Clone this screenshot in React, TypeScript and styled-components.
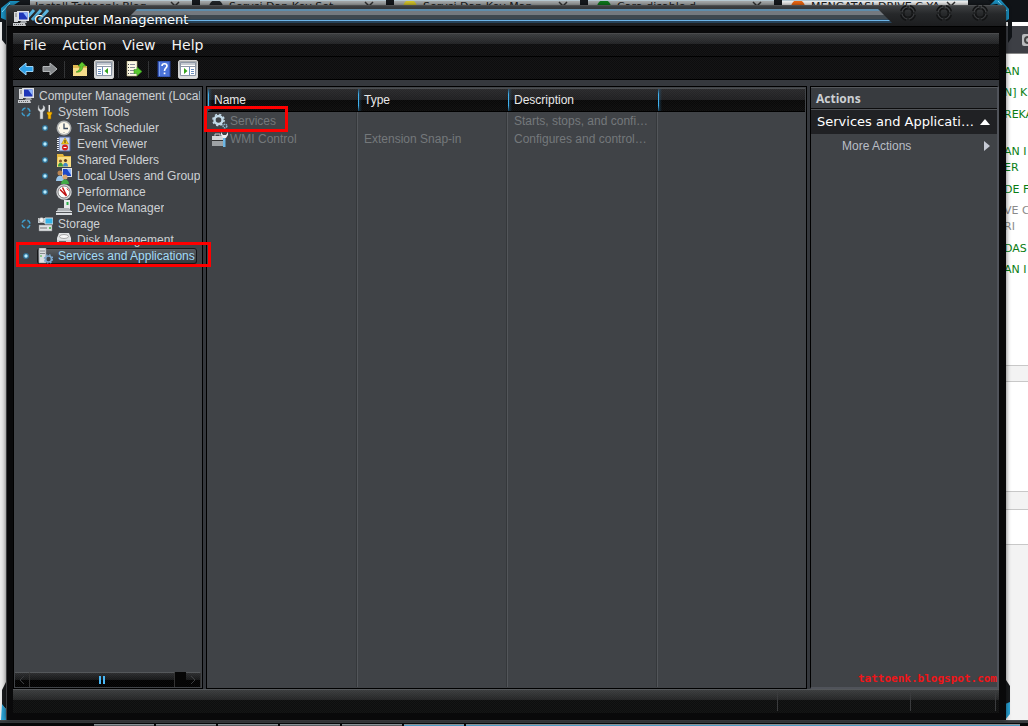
import React from "react";
import styled, { createGlobalStyle, css } from "styled-components";

const WIDE = '"DejaVu Sans", Verdana, sans-serif';
const NARROW = '"Liberation Sans", Arial, sans-serif';
const carbon = "conic-gradient(rgba(255,255,255,0.03) 25%, transparent 0 50%, rgba(255,255,255,0.03) 0 75%, transparent 0) 0 0 / 2px 2px";

const Global = createGlobalStyle`
  html, body, #root { height: 100%; }
  body { margin: 0; overflow: hidden; background: #fff; }
  *, *::before, *::after { box-sizing: border-box; }
  button { font: inherit; color: inherit; border: 0; background: none; padding: 0; margin: 0; text-align: left; }
  ul { list-style: none; margin: 0; padding: 0; }
  h2, h3, p { margin: 0; font: inherit; }
`;

/* ---------- desktop and browser behind the window ---------- */

const Desktop = styled.div`
  position: relative;
  height: 100vh;
  display: flex;
  flex-direction: column;
  overflow: hidden;
  background: #ebebeb;
`;

const TabStrip = styled.div`
  display: flex;
  height: 22px;
  flex: none;
  padding-left: 6px;
  background: #15191d;
  font: 11px/12px ${WIDE};
  color: #202020;
  overflow: hidden;
`;

const BrowserTab = styled.div<{ $active?: boolean }>`
  display: flex;
  flex: none;
  align-items: flex-start;
  gap: 6px;
  width: 186px;
  height: 12px;
  padding: 0 12px 0 8px;
  margin-right: 8px;
  white-space: nowrap;
  border-top: 1px solid #b9cdd6;
  background: ${(p) => (p.$active ? "#f4f5f5" : "#a9adae")};
  svg { flex: none; }
  span { flex: 1; overflow: hidden; height: 10px; }
`;

const Backdrop = styled.div`
  flex: 1;
  display: flex;
  justify-content: flex-end;
`;

const WebPage = styled.div`
  width: 28px;
  display: flex;
  flex-direction: column;
  background: #fff;
  font: 11px/16px ${WIDE};
  white-space: nowrap;
  overflow: hidden;
`;

const PageBar = styled.div`
  height: 28px;
  margin-top: 4px;
  padding: 8px 0 0 22px;
  background: #3d3f45;
  border-bottom: 1px solid #888;
  svg { display: block; }
`;

const PageLine = styled.p<{ $gap: number; $muted?: boolean }>`
  height: 16px;
  padding-left: 4px;
  margin-top: ${(p) => p.$gap}px;
  color: ${(p) => (p.$muted ? "#8a8a8a" : "#0a7d14")};
`;

const PageBand = styled.div<{ $h: number; $shade?: boolean }>`
  height: ${(p) => p.$h}px;
  background: ${(p) => (p.$shade ? "#f3f3f3" : "#fff")};
  border-top: ${(p) => (p.$shade ? "1px solid #c8c8c8" : "0")};
  border-bottom: ${(p) => (p.$shade ? "1px solid #c8c8c8" : "0")};
`;

const PageFooter = styled.div`
  flex: 1;
  border-top: 1px solid #c8c8c8;
  background: #f3f3f3;
`;

const Taskbar = styled.div`
  height: 6px;
  flex: none;
  display: flex;
  gap: 2px;
  padding: 3px 8px 0 94px;
  border-top: 1px solid #4a4c4f;
  background: linear-gradient(#3a3c3f 0 2px, #08090a 2px);
`;

const Task = styled.div<{ $tone?: "on" | "strip" }>`
  width: 60px;
  height: 4px;
  background: ${(p) => (p.$tone ? "#4f9cc4" : "#5b6064")};
  border-top: 1px solid #8d9498;
  ${(p) => p.$tone === "strip" && css`flex: 1;`}
`;

/* ---------- window chrome ---------- */

const Window = styled.section`
  position: absolute;
  inset: 5px 22px 6px 6px;
  display: flex;
  flex-direction: column;
  background: #09090a;
  border-left: 1px solid #3c3d3f;
  border-radius: 5px 5px 0 0;
  box-shadow: 0 0 5px rgba(0, 0, 0, 0.6);
`;

const Corner = styled.svg<{ $v: "top" | "bottom"; $h: "left" | "right" }>`
  position: absolute;
  ${(p) => p.$v}: 0;
  ${(p) => p.$h}: 0;
  width: 40px;
  height: 46px;
`;

const TitleBar = styled.header`
  position: relative;
  flex: none;
  display: flex;
  align-items: center;
  height: 22px;
  padding: 0 16px 0 6px;
  border-radius: 5px 5px 0 0;
  border-top: 1px solid #4c4e50;
  border-bottom: 1px solid #000;
  background: linear-gradient(#3e4042, #26282a 40%, #1c1d1f);
`;

const TitleBand = styled.div`
  position: absolute;
  left: 116px;
  right: 114px;
  top: 3px;
  height: 14px;
  clip-path: polygon(14px 0, calc(100% - 14px) 0, 100% 100%, 0 100%);
  background: linear-gradient(#5e8cab 0 2px, #74797f 2px 6px, #3f484f 6px 10px, #2e4558 10px 11px, #6db4e6 11px 12px, #27435a 12px);
`;

const TitleStripes = styled.svg`
  position: absolute;
  left: 16px;
  top: 3px;
`;

const Title = styled.h1`
  position: relative;
  flex: 1;
  margin: 0;
  padding: 8px 0 0 5px;
  font: 13px/16px ${WIDE};
  color: #fff;
  text-shadow: 0 0 3px #000;
`;

const TitleIcon = styled.span`
  position: relative;
  display: flex;
  padding-top: 5px;
`;

const WindowButtons = styled.div`
  display: flex;
  gap: 16px;
  align-items: center;
  padding-bottom: 6px;
  button { display: flex; width: 20px; height: 20px; align-items: center; justify-content: center; }
`;

const Client = styled.div`
  flex: 1;
  min-height: 0;
  display: flex;
  flex-direction: column;
  margin: 6px 7px 7px 6px;
`;

const MenuBar = styled.nav`
  flex: none;
  display: flex;
  height: 24px;
  padding: 0 2px;
  border-top: 1px solid #4a4b4d;
  border-bottom: 1px solid #000;
  background: ${carbon}, linear-gradient(#3a3c3e, #202123 10px, #0d0d0e 10px);
  font: 14px/20px ${WIDE};
  color: #f2f2f2;
  button { padding: 0 8px; }
`;

const ToolBar = styled.div`
  flex: none;
  display: flex;
  align-items: center;
  height: 23px;
  padding: 2px 0 0 3px;
  border-bottom: 1px solid #000;
  background: ${carbon}, #0d0d0e;
`;

const Tool = styled.button<{ $framed?: boolean }>`
  display: flex;
  align-items: center;
  justify-content: center;
  width: 20px;
  height: 19px;
  margin-right: 4px;
  ${(p) =>
    p.$framed &&
    css`
      border: 1px solid #d4d4d4;
      border-radius: 2px;
      background: linear-gradient(#a8abad, #dcdedf);
    `}
`;

const Divider = styled.span`
  width: 1px;
  height: 17px;
  margin-right: 5px;
  background: #333436;
`;

const Workspace = styled.main`
  flex: 1;
  min-height: 0;
  display: grid;
  grid-template-columns: 190px minmax(0, 1fr) 189px;
  gap: 3px;
  padding-top: 6px;
  background: #35383d;
`;

const pane = css`
  min-width: 0;
  min-height: 0;
  display: flex;
  flex-direction: column;
  border: 1px solid #000;
  background: #404347;
  color: #cdd0d3;
  font: 12px/16px ${NARROW};
`;

/* ---------- tree ---------- */

const TreePane = styled.aside`
  ${pane}
`;

const Tree = styled.ul`
  flex: 1;
  padding-top: 1px;
`;

const TreeItem = styled.li<{ $level: number }>`
  position: relative;
  display: flex;
  align-items: center;
  height: 16px;
  padding-left: ${(p) => (p.$level === 0 ? 4 : 4 + (p.$level - 1) * 19)}px;
`;

const Marker = styled.span`
  flex: none;
  display: flex;
  width: 19px;
  padding-left: 2px;
`;

const Node = styled.button<{ $selected?: boolean }>`
  display: flex;
  align-items: center;
  min-width: 0;
  height: 16px;
  padding-right: 2px;
  svg { flex: none; }
  span { overflow: hidden; white-space: nowrap; padding-left: 5px; }
  ${(p) =>
    p.$selected &&
    css`
      color: #a4dcf8;
      border-radius: 3px;
      box-shadow: inset 0 0 0 1px #17181a;
      background: linear-gradient(#5c6064, #45494d 50%, #36393d);
    `}
`;

const Highlight = styled.span<{ $for: "tree" | "row" }>`
  position: absolute;
  z-index: 2;
  border: 3px solid #f00;
  pointer-events: none;
  ${(p) => (p.$for === "tree" ? "inset: -6px -9px -3px 2px;" : "inset: -6px auto -2px -4px; width: 84px;")}
`;

const ScrollBar = styled.div`
  flex: none;
  display: grid;
  grid-template-columns: 15px 1fr 11px 15px;
  height: 15px;
  margin: 0 1px 1px;
  background: #060606;
`;

const ScrollPart = styled.button`
  display: flex;
  align-items: center;
  justify-content: center;
  border-top: 1px solid #55585b;
  border-right: 1px solid #333;
  background: ${carbon}, linear-gradient(#2b2c2e, #161718 50%, #020202 50%);
`;

const Grip = styled.span`
  width: 6px;
  height: 8px;
  border: solid #48b7f5;
  border-width: 0 2px;
`;

/* ---------- list ---------- */

const ListPane = styled.div`
  ${pane}
  padding: 1px;
`;

const List = styled.table`
  width: 100%;
  height: 100%;
  table-layout: fixed;
  border-collapse: separate;
  border-spacing: 0;
  th, td { padding: 0; text-align: left; font-weight: normal; white-space: nowrap; overflow: hidden; text-overflow: ellipsis; }
`;

const HeadCell = styled.th`
  height: 24px;
  color: #e8e8e8;
  border-top: 1px solid #4c4f52;
  border-bottom: 1px solid #000;
  background: ${carbon}, linear-gradient(#29292b, #1f1f21 50%, #080808 50%, #0c0c0c);
  div {
    height: 22px;
    padding-left: 6px;
    line-height: 22px;
    background: linear-gradient(transparent, #3fb1ee 25%, #3fb1ee 75%, transparent) left / 1px 100% no-repeat,
      linear-gradient(90deg, rgba(40, 130, 190, 0.4), transparent 4px);
  }
`;

const Cell = styled.td`
  height: 18px;
  color: #74787b;
  border-right: 1px solid #53565a;
  box-shadow: inset -1px 0 0 #35383b;
  &:last-child { border-right: 0; box-shadow: none; }
`;

const CellText = styled.div`
  position: relative;
  display: flex;
  align-items: center;
  height: 18px;
  padding-left: 4px;
  span { overflow: hidden; text-overflow: ellipsis; padding: 0 8px 0 2px; }
`;

const TextOnly = styled.div`
  padding: 0 8px 0 6px;
  overflow: hidden;
  text-overflow: ellipsis;
`;

const LeadCell = styled(Cell)`
  && { overflow: visible; }
`;

/* ---------- actions ---------- */

const ActionsPane = styled.aside`
  ${pane}
  border-width: 1px 2px 2px 1px;
  border-color: #000 #50535a #50535a #000;
`;

const PaneHeading = styled.h2`
  height: 22px;
  padding-left: 5px;
  border-top: 1px solid #55585c;
  border-bottom: 1px solid #0c0c0d;
  background: #383b3f;
  font: bold 12px/21px "Open Sans", "Noto Sans", sans-serif;
`;

const GroupHeading = styled.button`
  display: flex;
  align-items: center;
  height: 25px;
  padding: 0 7px 0 6px;
  border-top: 1px solid #505357;
  background: #202124;
  color: #fff;
  font: 13px/16px ${WIDE};
  svg { flex: none; }
  span { flex: 1; min-width: 0; overflow: hidden; white-space: nowrap; text-overflow: ellipsis; margin-right: 4px; }
`;

const ActionItem = styled.button`
  display: flex;
  align-items: center;
  justify-content: space-between;
  height: 24px;
  padding: 0 7px 0 31px;
  color: #b9bec6;
`;

const Watermark = styled.a`
  margin-top: auto;
  align-self: flex-end;
  color: #f01418;
  font: bold 11px/16px "DejaVu Sans Mono", monospace;
  text-decoration: none;
`;

const StatusBar = styled.footer`
  flex: none;
  display: grid;
  grid-template-columns: 1fr 133px 85px 3px;
  height: 24px;
  padding: 2px 0;
  border-top: 1px solid #55585b;
  background: ${carbon}, linear-gradient(#3a3c3d, #232425 10px, #0d0e0e 10px);
  span { border-right: 1px solid #3a3b3d; }
  span:last-child { border: 0; }
`;

/* ---------- icons ---------- */

type IconName =
  | "computer" | "tools" | "clock" | "event" | "folder" | "users" | "gauge"
  | "device" | "storage" | "disk" | "server" | "gears" | "toolbox"
  | "back" | "forward" | "up" | "export" | "help" | "paneLeft" | "paneRight";

const art: Record<IconName, React.ReactNode> = {
  computer: (
    <>
      <path d="M1 1h4v10H1z" fill="#d6d8da" /><path d="M2 3h2M2 5h2" stroke="#777" />
      <path d="M4 0h12v10H5z" fill="#dfe2e5" /><path d="M6 1.500h8.500v7H6z" fill="#1d36b8" />
      <path d="M10 1.500h4.500v6z" fill="#8fb6ff" />
      <path d="M8 10h5l1 2H7z" fill="#9da1a5" /><path d="M0 12h12l1 3H0z" fill="#c9cccf" /><path d="M1 13.500h10" stroke="#666" strokeDasharray="1 1" />
    </>
  ),
  tools: (
    <>
      <path d="M2 1v3l2 2 2-2V1l2 2v3L6 8v7H3V8L1 6V3z" fill="#d9dcde" stroke="#76797c" strokeWidth=".5" />
      <path d="M11.500 1h1.500v7h-1.500z" fill="#e8e8e8" /><path d="M10 8h5v2l-1 1v4h-3v-4l-1-1z" fill="#f5b400" stroke="#8a5c00" strokeWidth=".6" />
    </>
  ),
  clock: (
    <>
      <circle cx="8" cy="8" r="7.500" fill="#a8abad" /><circle cx="8" cy="8" r="6" fill="#fdf8ea" />
      <path d="M8 3.500V8.500h4" fill="none" stroke="#3d4c60" strokeWidth="1.300" /><path d="M3 8h1M8 13v-1" stroke="#999" />
    </>
  ),
  event: (
    <>
      <path d="M3 1h11v14H3z" fill="#c9d5ee" stroke="#5068a0" /><path d="M2 2v13" stroke="#e9edf5" strokeWidth="2" strokeDasharray="1 1" />
      <path d="M9 2l3.500 6h-7z" fill="#ffd21c" stroke="#9a7000" strokeWidth=".5" /><path d="M9 4v3" stroke="#222" />
      <circle cx="9" cy="11.500" r="3" fill="#d32020" /><path d="M7.500 11.500h3" stroke="#fff" />
    </>
  ),
  folder: (
    <>
      <path d="M1 2h6l1 2h7v11H1z" fill="#e4b63e" /><path d="M2 5h13v10H1z" fill="#f8dd84" />
      <circle cx="4.500" cy="9" r="1.600" fill="#8a5a2c" /><path d="M2 14.500c0-5 5-5 5 0z" fill="#3a9a3c" />
      <circle cx="9.500" cy="8.500" r="1.600" fill="#5d3a18" /><path d="M7 14.500c0-5 5-5 5 0z" fill="#3f86c8" />
    </>
  ),
  users: (
    <>
      <path d="M6 0h10v9H6z" fill="#dfe2e5" /><path d="M7 1h8v7H7z" fill="#1d48c8" /><path d="M11 1h4v6z" fill="#8fb6ff" />
      <circle cx="4" cy="5" r="2.500" fill="#b98451" /><path d="M0 13c0-7 8-7 8 0z" fill="#9cc9ee" />
      <circle cx="9" cy="9" r="2.500" fill="#d8a571" /><path d="M5 16c0-6 8-6 8 0z" fill="#3faa45" />
    </>
  ),
  gauge: (
    <>
      <circle cx="8" cy="8" r="7.700" fill="#d4d6d8" /><circle cx="8" cy="8" r="6" fill="#fff" stroke="#555" strokeWidth=".7" />
      <path d="M4 5.500L10.500 12M6.500 3.500l4 8" stroke="#c01414" strokeWidth="1.500" /><path d="M11 4.500l1.500 2" stroke="#c01414" />
    </>
  ),
  device: (
    <>
      <path d="M8 0h6v9H8z" fill="#e6e8ea" /><path d="M10.500 2h2v3h-2z" fill="#2ab04a" />
      <path d="M2 8h11l2 3H1z" fill="#aeb2b5" /><path d="M0 11h16v4H0z" fill="#dadde0" /><path d="M0 12.500h16" stroke="#55585b" />
    </>
  ),
  storage: (
    <>
      <path d="M1 2h7v5H1z" fill="#c5c9cc" /><circle cx="4.500" cy="4" r="2.500" fill="#f2f2f2" stroke="#777" strokeWidth=".5" />
      <path d="M8 2h8v6H8z" fill="#35b4e8" stroke="#d8dbde" /><path d="M2 9h13v6H2z" fill="#dfe2e4" stroke="#85898c" strokeWidth=".5" />
      <path d="M3 12h7" stroke="#777" /><path d="M12 12h2" stroke="#36b33e" strokeWidth="1.500" />
    </>
  ),
  disk: (
    <>
      <path d="M3 1h10l2 5v3H1V6z" fill="#e0e2e4" /><ellipse cx="8" cy="4.500" rx="4.500" ry="2" fill="#f8f8f8" stroke="#888" strokeWidth=".7" /><path d="M1 8h14v5H1z" fill="#c8cbce" /><path d="M3 9.500h7" stroke="#666" />
    </>
  ),
  server: (
    <>
      <path d="M2 0h7v15H2z" fill="#dcdfe1" stroke="#8d9194" strokeWidth=".6" /><path d="M3 3h5M3 5.500h5" stroke="#868a8d" /><path d="M3 8h2" stroke="#36b33e" />
      <circle cx="11.500" cy="11" r="3" fill="none" stroke="#7da8cf" strokeWidth="1.600" /><circle cx="11.500" cy="11" r="4.200" fill="none" stroke="#7da8cf" strokeWidth="1.200" strokeDasharray="1.700 1.600" />
    </>
  ),
  gears: (
    <>
      <circle cx="6.500" cy="7" r="4" fill="none" stroke="#c3dae8" strokeWidth="2.400" /><circle cx="6.500" cy="7" r="5.600" fill="none" stroke="#c3dae8" strokeWidth="1.500" strokeDasharray="2.200 2.200" />
      <circle cx="13" cy="13" r="1.800" fill="none" stroke="#8fb4cc" strokeWidth="1.600" strokeDasharray="1.500 .6" />
    </>
  ),
  toolbox: (
    <>
      <path d="M3 5V3h5v2" fill="none" stroke="#c8cbcd" /><path d="M0 5h11v4H0z" fill="#d4d6d8" /><path d="M0 10h11v5H0z" fill="#9ea2a5" /><path d="M0 9.500h11" stroke="#333" />
      <path d="M11 7h2.500v9H11z" fill="#6cb6e4" /><path d="M9 1v3l2 3h3l2-3V1l-2 3h-3z" fill="#eceeef" />
    </>
  ),
  back: <path d="M1 8l7-6v3.500h7v5H8V14z" fill="#2e9fe6" stroke="#9cd6fa" />,
  forward: <path d="M15 8L8 2v3.500H1v5h7V14z" fill="#85888b" stroke="#b5b8ba" />,
  up: (
    <>
      <path d="M1 4h5l1 1h8v10H1z" fill="#e0b850" /><path d="M1 7h14v8H1z" fill="#f6dc8a" />
      <path d="M4 11c3-1 4-3 4-6H6l4-4 4 4h-3c0 4-3 7-7 6z" fill="#5fc62e" stroke="#2d7c10" strokeWidth=".5" />
    </>
  ),
  export: (
    <>
      <path d="M1 0h10v15H1z" fill="#fbf8e4" stroke="#b3a87a" strokeWidth=".6" /><path d="M4 3.500h5M4 6.500h5M4 9.500h4M4 12.500h5" stroke="#8a8c98" /><path d="M2 3.500h1M2 6.500h1M2 9.500h1M2 12.500h1" stroke="#444" />
      <path d="M8 8.500h3V6l5 4.500-5 4.500v-2.500H8z" fill="#58c832" stroke="#2d8a12" strokeWidth=".5" />
    </>
  ),
  help: (
    <>
      <path d="M2 0h12v16H2z" fill="#4a72d8" stroke="#24409a" /><path d="M3.500 1v14" stroke="#7da0f0" />
      <path d="M6 5c0-3 5-3 5 0 0 2-2.500 2-2.500 5" fill="none" stroke="#fff" strokeWidth="1.600" /><path d="M7.700 11.500h1.700v1.700H7.700z" fill="#fff" />
    </>
  ),
  paneLeft: (
    <>
      <path d="M.5 1.500h15v13H.5z" fill="#fff" stroke="#8d97a6" /><path d="M1 3h14M1 5.500h14" stroke="#8d97a6" />
      <path d="M6.500 6v8M2 8.500h3M2 10.500h3M2 12.500h3" stroke="#6b90c0" /><path d="M12 7v6L8.500 10z" fill="#35a51e" />
    </>
  ),
  paneRight: (
    <>
      <path d="M.5 1.500h15v13H.5z" fill="#fff" stroke="#8d97a6" /><path d="M1 3h14M1 5.500h14" stroke="#8d97a6" />
      <path d="M9.500 6v8M11 8.500h3M11 10.500h3M11 12.500h3" stroke="#6b90c0" /><path d="M4 7v6l3.500-3z" fill="#35a51e" />
    </>
  ),
};

const Icon = ({ name }: { name: IconName }) => (
  <svg width="16" height="16" viewBox="0 0 16 16" aria-hidden="true">{art[name]}</svg>
);

const Ring = () => (
  <svg width="12" height="12" viewBox="0 0 12 12" aria-hidden="true">
    <circle cx="6" cy="6" r="4" fill="none" stroke="#3f9ccb" strokeWidth="1.600" strokeDasharray="4.280 2" strokeDashoffset="-1" />
  </svg>
);

const Dot = () => (
  <svg width="12" height="12" viewBox="0 0 12 12" aria-hidden="true">
    <circle cx="6" cy="6" r="3" fill="#2a86b8" opacity=".7" /><circle cx="6" cy="6" r="1.700" fill="#b8ecff" />
  </svg>
);

const Crosshair = () => (
  <svg width="20" height="20" viewBox="0 0 20 20" aria-hidden="true">
    <circle cx="10" cy="10" r="7.500" fill="none" stroke="#131415" strokeWidth="1.500" strokeDasharray="8 3.780" strokeDashoffset="-1.900" />
    <circle cx="10" cy="10" r="4.500" fill="none" stroke="#131415" strokeWidth="1.500" strokeDasharray="5 2.070" strokeDashoffset="-1" />
    <circle cx="10" cy="10" r="6" fill="none" stroke="#46484a" strokeWidth=".7" />
    <path d="M10 3v4M10 13v4M3 10h4M13 10h4" stroke="#131415" />
  </svg>
);

/* ---------- data ---------- */

type TreeRow = { level: number; icon: IconName; label: string; mark?: "ring" | "dot"; selected?: boolean };

const tree: TreeRow[] = [
  { level: 0, icon: "computer", label: "Computer Management (Local)" },
  { level: 1, icon: "tools", label: "System Tools", mark: "ring" },
  { level: 2, icon: "clock", label: "Task Scheduler", mark: "dot" },
  { level: 2, icon: "event", label: "Event Viewer", mark: "dot" },
  { level: 2, icon: "folder", label: "Shared Folders", mark: "dot" },
  { level: 2, icon: "users", label: "Local Users and Groups", mark: "dot" },
  { level: 2, icon: "gauge", label: "Performance", mark: "dot" },
  { level: 2, icon: "device", label: "Device Manager" },
  { level: 1, icon: "storage", label: "Storage", mark: "ring" },
  { level: 2, icon: "disk", label: "Disk Management" },
  { level: 1, icon: "server", label: "Services and Applications", mark: "dot", selected: true },
];

const tabs = [
  { title: "Install Tattoenk Blog", color: "#e8641b" },
  { title: "Servsi Dan Key Set", color: "#22262a" },
  { title: "Servsi Dan Key Man", color: "#d9c92e" },
  { title: "Cara disable d", color: "#0d7a1c" },
  { title: "MENGATASI DRIVE C YA", color: "#f26a13", active: true },
];

const pageLines = [
  { text: "AN", gap: 10 },
  { text: "N] K", gap: 5 },
  { text: "REKA", gap: 6 },
  { text: "AN I", gap: 21 },
  { text: "ER", gap: 0 },
  { text: "DE F", gap: 6 },
  { text: "VE C", gap: 5, muted: true },
  { text: "RI", gap: 0, muted: true },
  { text: "DAS", gap: 6 },
  { text: "AN I", gap: 5 },
];

export default function App() {
  return (
    <>
      <Global />
      <Desktop>
        <TabStrip>
          {tabs.map((t) => (
            <BrowserTab key={t.title} $active={t.active}>
              <svg width="15" height="12" aria-hidden="true"><circle cx="8" cy="6" r="7" fill={t.color} /></svg>
              <span>{t.title}</span>
              <svg width="10" height="10" aria-hidden="true"><path d="M1 1l8 8M9 1l-8 8" stroke="#333" strokeWidth="1.500" /></svg>
            </BrowserTab>
          ))}
        </TabStrip>
        <Backdrop>
          <WebPage>
            <PageBar>
              <svg width="12" height="12" aria-hidden="true"><rect width="12" height="12" rx="2" fill="#b9bbbd" /><circle cx="6" cy="6" r="3" fill="none" stroke="#444" strokeWidth="2" /></svg>
            </PageBar>
            {pageLines.map((l, i) => (
              <PageLine key={i} $gap={l.gap} $muted={l.muted}>{l.text}</PageLine>
            ))}
            <PageBand $h={87} />
            <PageBand $h={17} $shade />
            <PageBand $h={109} />
            <PageBand $h={19} $shade />
            <PageBand $h={34} />
            <PageFooter />
          </WebPage>
        </Backdrop>
        <Taskbar>
          <Task /><Task /><Task /><Task /><Task /><Task $tone="on" /><Task $tone="strip" />
        </Taskbar>

        <Corner $v="top" $h="left" viewBox="0 0 40 46">
          <path d="M0 0h30v8H14L7 22v24L2 40V22H0z" fill="#15191d" />
          <path d="M1 18V8l9-7h10l-6 4-6 8v8z" fill="#1c93c4" /><path d="M2 12l8-9" stroke="#8be0ff" />
        </Corner>
        <Corner $v="top" $h="right" viewBox="0 0 40 46">
          <path d="M0 0h40v21H24v16l-4 6V8L6 5z" fill="#101317" />
          <path d="M2 5l5-5h6l8 9v10l-5 3V10L9 4z" fill="#1c93c4" /><path d="M10 1l9 10" stroke="#8be0ff" />
        </Corner>
        <Corner $v="bottom" $h="left" viewBox="0 0 40 46">
          <path d="M7 0v30l-5-5V10z" fill="#1a1c1e" /><path d="M2 24l6 8v8H1z" fill="#2aa3d6" />
        </Corner>
        <Corner $v="bottom" $h="right" viewBox="0 0 40 46">
          <path d="M18 0l4 6v18l-4 4z" fill="#1a1c1e" /><path d="M17 24l5-2v12l-5 6h-5z" fill="#2aa3d6" />
        </Corner>

        <Window aria-label="Computer Management">
          <TitleBar>
            <TitleBand />
            <TitleStripes width="30" height="12" viewBox="0 0 30 12" aria-hidden="true">
              <path d="M2 11L11 1M9 11l9-10M16 11l9-10" stroke="#59b5e0" strokeWidth="3" />
            </TitleStripes>
            <TitleIcon><Icon name="computer" /></TitleIcon>
            <Title>Computer Management</Title>
            <WindowButtons>
              <button aria-label="Minimize"><Crosshair /></button>
              <button aria-label="Maximize"><Crosshair /></button>
              <button aria-label="Close"><Crosshair /></button>
            </WindowButtons>
          </TitleBar>

          <Client>
            <MenuBar>
              <button>File</button><button>Action</button><button>View</button><button>Help</button>
            </MenuBar>
            <ToolBar>
              <Tool aria-label="Back"><Icon name="back" /></Tool>
              <Tool aria-label="Forward"><Icon name="forward" /></Tool>
              <Divider />
              <Tool aria-label="Up one level"><Icon name="up" /></Tool>
              <Tool $framed aria-label="Show console tree"><Icon name="paneLeft" /></Tool>
              <Divider />
              <Tool aria-label="Export list"><Icon name="export" /></Tool>
              <Divider />
              <Tool aria-label="Help"><Icon name="help" /></Tool>
              <Tool $framed aria-label="Show action pane"><Icon name="paneRight" /></Tool>
            </ToolBar>

            <Workspace>
              <TreePane>
                <Tree>
                  {tree.map((n) => (
                    <TreeItem key={n.label} $level={n.level}>
                      {n.level > 0 && <Marker>{n.mark === "ring" ? <Ring /> : n.mark === "dot" ? <Dot /> : null}</Marker>}
                      <Node $selected={n.selected}>
                        <Icon name={n.icon} />
                        <span>{n.label}</span>
                      </Node>
                      {n.selected && <Highlight $for="tree" />}
                    </TreeItem>
                  ))}
                </Tree>
                <ScrollBar>
                  <ScrollPart aria-label="Scroll left">
                    <svg width="8" height="8" aria-hidden="true"><path d="M6 0L2 4l4 4" fill="none" stroke="#3c3e40" /></svg>
                  </ScrollPart>
                  <ScrollPart aria-label="Scroll position"><Grip /></ScrollPart>
                  <span />
                  <ScrollPart aria-label="Scroll right">
                    <svg width="8" height="8" aria-hidden="true"><path d="M2 0l4 4-4 4" fill="none" stroke="#3c3e40" /></svg>
                  </ScrollPart>
                </ScrollBar>
              </TreePane>

              <ListPane>
                <List>
                  <colgroup>
                    <col width="150" /><col width="150" /><col width="150" /><col />
                  </colgroup>
                  <thead>
                    <tr>
                      <HeadCell><div>Name</div></HeadCell>
                      <HeadCell><div>Type</div></HeadCell>
                      <HeadCell><div>Description</div></HeadCell>
                      <HeadCell><div /></HeadCell>
                    </tr>
                  </thead>
                  <tbody>
                    <tr>
                      <LeadCell><CellText><Icon name="gears" /><span>Services</span><Highlight $for="row" /></CellText></LeadCell>
                      <Cell />
                      <Cell><TextOnly>Starts, stops, and configures Windows services.</TextOnly></Cell>
                      <Cell />
                    </tr>
                    <tr>
                      <LeadCell><CellText><Icon name="toolbox" /><span>WMI Control</span></CellText></LeadCell>
                      <Cell><TextOnly>Extension Snap-in</TextOnly></Cell>
                      <Cell><TextOnly>Configures and controls the WMI service.</TextOnly></Cell>
                      <Cell />
                    </tr>
                    <tr style={{ height: "100%" }} aria-hidden="true"><Cell /><Cell /><Cell /><Cell /></tr>
                  </tbody>
                </List>
              </ListPane>

              <ActionsPane>
                <PaneHeading>Actions</PaneHeading>
                <GroupHeading>
                  <span>Services and Applications</span>
                  <svg width="10" height="6" aria-hidden="true"><path d="M0 6l5-6 5 6z" fill="#fff" /></svg>
                </GroupHeading>
                <ActionItem>
                  More Actions
                  <svg width="6" height="10" aria-hidden="true"><path d="M0 0l6 5-6 5z" fill="#c6cad4" /></svg>
                </ActionItem>
                <Watermark href="#tattoenk">tattoenk.blogspot.com</Watermark>
              </ActionsPane>
            </Workspace>
            <StatusBar><span /><span /><span /><span /></StatusBar>
          </Client>
        </Window>
      </Desktop>
    </>
  );
}
